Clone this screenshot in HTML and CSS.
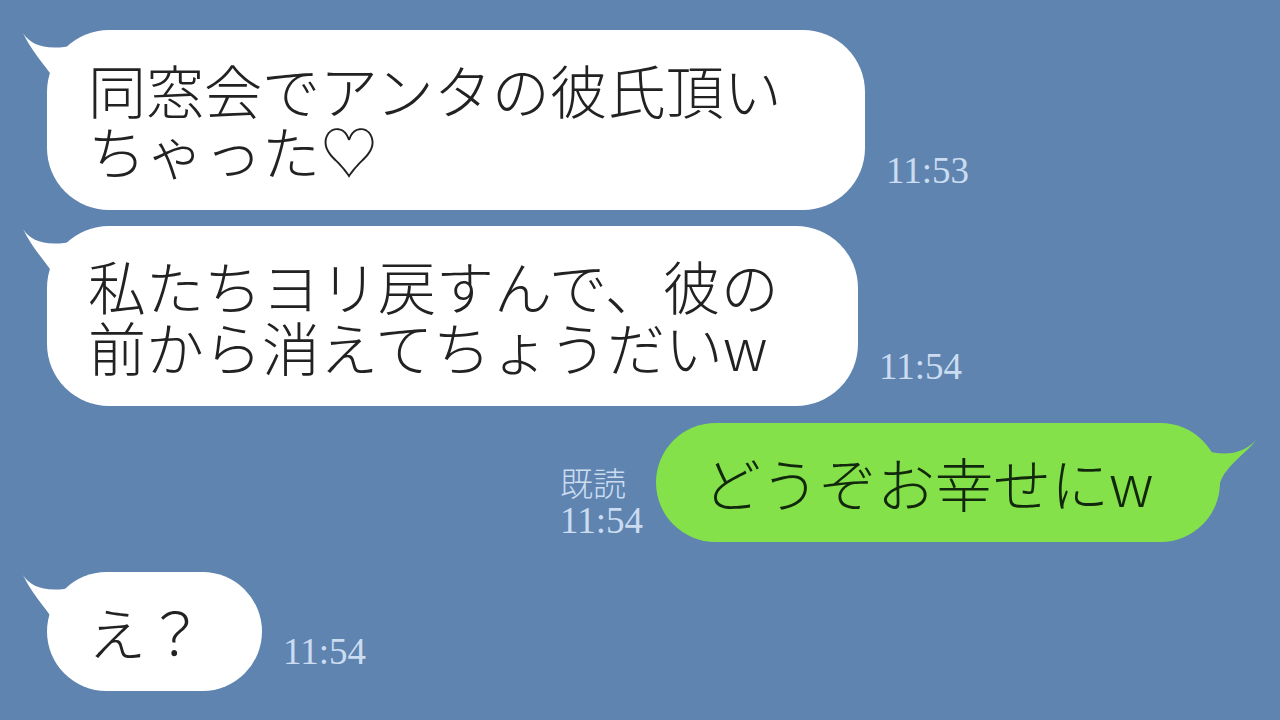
FILE: index.html
```html
<!DOCTYPE html>
<html lang="ja">
<head>
    <meta charset="UTF-8">
    <meta name="viewport" content="width=device-width, initial-scale=1.0">
    <title>トーク</title>
    <link rel="stylesheet" href="styles.css">
</head>
<body>
    <div class="chat">
        <div class="row row-left row-first">
            <div class="bubble bubble-in bubble-wide">
                <svg class="tail tail-left" viewBox="0 0 60 70"><path d="M2 3 C10 16 28 22 58 14 L58 62 L40 62 C32 42 14 28 2 3 Z"/></svg>
                同窓会でアンタの彼氏頂い<br>ちゃった♡
            </div>
            <div class="time">11:53</div>
        </div>

        <div class="row row-left row-second">
            <div class="bubble bubble-in bubble-mid">
                <svg class="tail tail-left" viewBox="0 0 60 70"><path d="M2 3 C10 16 28 22 58 14 L58 62 L40 62 C32 42 14 28 2 3 Z"/></svg>
                私たちヨリ戻すんで、彼の<br>前から消えてちょうだいw
            </div>
            <div class="time">11:54</div>
        </div>

        <div class="row row-right">
            <div class="meta">
                <div class="read">既読</div>
                <div class="time time-own">11:54</div>
            </div>
            <div class="bubble bubble-out">
                <svg class="tail tail-right" viewBox="0 0 60 70"><path d="M58 16 C44 32 24 34 2 26 L2 64 L20 64 C24 44 44 34 58 16 Z"/></svg>
                どうぞお幸せにw
            </div>
        </div>

        <div class="row row-left row-last">
            <div class="bubble bubble-in bubble-short">
                <svg class="tail tail-left" viewBox="0 0 60 70"><path d="M2 3 C10 16 28 22 58 14 L58 62 L40 62 C32 42 14 28 2 3 Z"/></svg>
                え？
            </div>
            <div class="time">11:54</div>
        </div>
    </div>
</body>
</html>
```

FILE: styles.css
```css
body {
    margin: 0;
    padding: 0;
    background-color: #5f84b0;
    font-family: "Noto Sans CJK JP", "Noto Sans", sans-serif;
}

.chat {
    padding-top: 30px;
}

.row {
    display: flex;
    align-items: flex-end;
}

.row-left {
    padding-left: 47px;
}

.row-second {
    margin-top: 16px;
}

.row-right {
    justify-content: flex-end;
    padding-right: 60px;
    margin-top: 17px;
}

.row-last {
    margin-top: 30px;
}

.bubble {
    position: relative;
    font-size: 58px;
    font-weight: 300;
    line-height: 61px;
    color: #222;
    border-radius: 62px;
    padding: 29px 0 29px 41px;
    white-space: nowrap;
}

.bubble-in {
    background-color: #fff;
}

.bubble-wide {
    width: 777px;
}

.bubble-mid {
    width: 770px;
}

.bubble-short {
    width: 174px;
}

.bubble-out {
    background-color: #85e14a;
    color: #12280c;
    width: 517px;
    padding-left: 47px;
}

.tail {
    position: absolute;
    top: 0;
    width: 60px;
    height: 70px;
}

.tail-left {
    left: -26px;
}

.tail-left path {
    fill: #fff;
}

.tail-right {
    right: -39px;
}

.tail-right path {
    fill: #85e14a;
}

.time {
    font-family: "Liberation Serif", "DejaVu Serif", serif;
    font-size: 37px;
    line-height: 37px;
    color: #cbdcf1;
    margin-left: 21px;
    margin-bottom: 21px;
}

.meta {
    margin-right: 13px;
    margin-bottom: 3px;
}

.read {
    font-size: 33px;
    font-weight: 300;
    line-height: 40px;
    color: #cbdcf1;
}

.time-own {
    margin: 0;
}
```
